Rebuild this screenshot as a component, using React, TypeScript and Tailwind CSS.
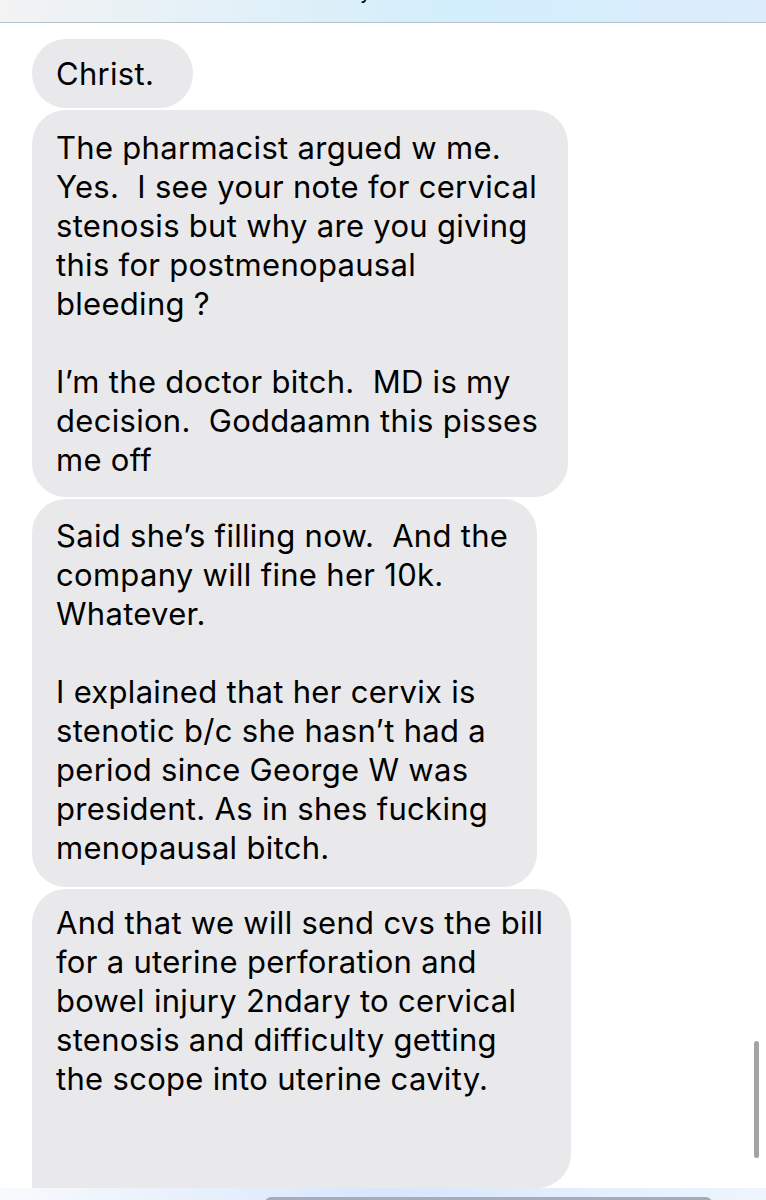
import React from "react";

type Bubble = { lines: string[]; w: string; h: string; pt: string; extra?: string };

const bubbles: Bubble[] = [
  { lines: ["Christ."], w: "w-[161px]", h: "h-[69px]", pt: "pt-[15px]" },
  {
    lines: [
      "The pharmacist argued w me.",
      "Yes.  I see your note for cervical",
      "stenosis but why are you giving",
      "this for postmenopausal",
      "bleeding ?",
      "",
      "I\u2019m the doctor bitch.  MD is my",
      "decision.  Goddaamn this pisses",
      "me off",
    ],
    w: "w-[536px]",
    h: "h-[387px]",
    pt: "pt-[18px]",
  },
  {
    lines: [
      "Said she\u2019s filling now.  And the",
      "company will fine her 10k.",
      "Whatever.",
      "",
      "I explained that her cervix is",
      "stenotic b/c she hasn\u2019t had a",
      "period since George W was",
      "president. As in shes fucking",
      "menopausal bitch.",
    ],
    w: "w-[505px]",
    h: "h-[388px]",
    pt: "pt-[17px]",
  },
  {
    lines: [
      "And that we will send cvs the bill",
      "for a uterine perforation and",
      "bowel injury 2ndary to cervical",
      "stenosis and difficulty getting",
      "the scope into uterine cavity.",
    ],
    w: "w-[539px]",
    h: "h-[299px]",
    pt: "pt-[14px]",
    extra: "rounded-bl-none",
  },
];

export default function App() {
  return (
    <div
      className="relative w-[766px] h-[1200px] overflow-hidden bg-white flex flex-col"
      style={{ fontFamily: "Inter, 'Noto Sans', sans-serif" }}
    >
      <div className="h-[23px] shrink-0 border-b border-[#b5c3cf] bg-gradient-to-r from-[#f3f3f3] via-[#d2eefc] via-60% to-[#dcecfc] overflow-hidden">
        <div className="pl-[360px] -mt-[20px] text-[20px] leading-[24px] text-black">y</div>
      </div>
      <div className="flex-1 flex flex-col gap-[2px] pl-[32px] pt-[16px] overflow-hidden">
        {bubbles.map((b, i) => (
          <div
            key={i}
            className={`${b.w} ${b.h} ${b.pt} shrink-0 rounded-[34px] ${b.extra ?? ""} bg-[#e9e9eb] pl-[24px] text-[31px] leading-[39px] text-black whitespace-pre tracking-[0.3px]`}
          >
            {b.lines.map((l, j) => (
              <div key={j} className="h-[39px]">
                {l}
              </div>
            ))}
          </div>
        ))}
      </div>
      <div className="h-[12px] shrink-0 bg-gradient-to-r from-[#f8fafd] via-[#d8e6fc] to-[#eef5fe] flex justify-start">
        <div className="ml-[265px] mt-[9px] w-[447px] h-[6px] rounded-t-[6px] bg-[#a6adba]" />
      </div>
      <div className="absolute left-[754px] top-[1041px] w-[5px] h-[117px] rounded-full bg-[#a3a3a3]" />
    </div>
  );
}
